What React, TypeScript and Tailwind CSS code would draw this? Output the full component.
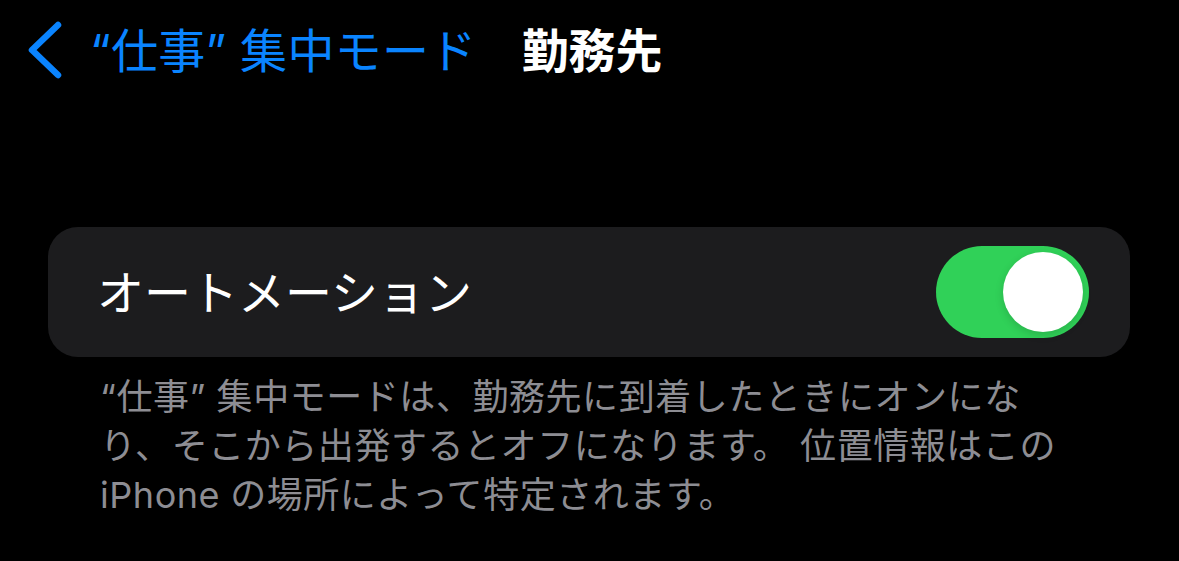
export default function App() {
  return (
    <div
      className="min-h-screen w-[1179px] overflow-hidden bg-black"
      style={{ fontFamily: '"Inter", "Noto Sans CJK JP", sans-serif' }}
    >
      {/* Navigation bar */}
      <header className="flex h-[100px] items-center pl-[27px]">
        <svg width="36" height="58" viewBox="0 0 36 58" fill="none" className="shrink-0">
          <polyline
            points="31,4 5,29 31,54"
            stroke="#0a84ff"
            strokeWidth="6.5"
            strokeLinecap="round"
            strokeLinejoin="round"
          />
        </svg>
        <span className="ml-[27px] text-[47px] leading-none tracking-[0.3px] text-[#0a84ff]">“仕事” 集中モード</span>
        <span className="ml-[45px] text-[47px] font-bold leading-none text-white">勤務先</span>
      </header>

      {/* Automation toggle */}
      <section className="mt-[127px] pl-[48px]">
        <div className="flex h-[130px] w-[1082px] items-center justify-between rounded-[30px] bg-[#1c1c1e] pl-[49px] pr-[41px]">
          <span className="text-[47px] leading-none text-white">オートメーション</span>
          <div className="flex h-[92px] w-[153px] items-center justify-end rounded-full bg-[#30d158] p-[6px]">
            <div className="h-[80px] w-[80px] rounded-full bg-white shadow-[0_3px_8px_rgba(0,0,0,0.15)]" />
          </div>
        </div>
        <p className="mt-[16px] pl-[52px] text-[36px] leading-[49px] tracking-[0.55px] text-[#8d8d93]">
          “仕事” 集中モードは、勤務先に到着したときにオンにな
          <br />
          り、そこから出発するとオフになります。 位置情報はこの
          <br />
          iPhone<span className="inline-block w-[10px]" />の場所によって特定されます。
        </p>
      </section>
    </div>
  );
}
